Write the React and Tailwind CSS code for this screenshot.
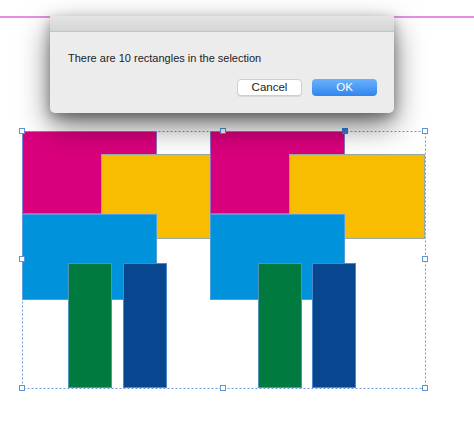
import React from "react";

const rects = [
  // left group
  { x: 22, y: 131, w: 135, h: 83, c: "bg-[#d9007d]" },
  { x: 101, y: 154, w: 136, h: 85, c: "bg-[#f8bc00]" },
  { x: 22, y: 214, w: 135, h: 86, c: "bg-[#0093dc]" },
  { x: 68, y: 263, w: 44, h: 125, c: "bg-[#007a3e]" },
  { x: 123, y: 263, w: 44, h: 125, c: "bg-[#06478f]" },
  // right group
  { x: 210, y: 131, w: 135, h: 83, c: "bg-[#d9007d]" },
  { x: 289, y: 154, w: 136, h: 85, c: "bg-[#f8bc00]" },
  { x: 210, y: 214, w: 135, h: 86, c: "bg-[#0093dc]" },
  { x: 258, y: 263, w: 44, h: 125, c: "bg-[#007a3e]" },
  { x: 312, y: 263, w: 44, h: 125, c: "bg-[#06478f]" },
];

const handles = [
  [22, 131], [223, 131], [425, 131],
  [22, 259], [425, 259],
  [22, 388], [223, 388], [425, 388],
];

const App = () => {
  return (
    <div
      className="relative w-[474px] h-[425px] bg-white overflow-hidden"
      style={{ fontFamily: '"Liberation Sans", Arial, sans-serif' }}
    >
      <div className="absolute left-0 top-[16px] h-[2px] w-full bg-[#e68fe6]" />

      {rects.map((r, i) => (
        <div
          key={i}
          className={`absolute border border-[#6fa3e4]/70 ${r.c}`}
          style={{ left: r.x, top: r.y, width: r.w, height: r.h }}
        />
      ))}

      <svg className="absolute left-0 top-0" width="474" height="425">
        <rect
          x="22.5"
          y="131.5"
          width="403"
          height="257"
          fill="none"
          stroke="#6b9fe2"
          strokeWidth="1"
          strokeDasharray="2 2"
        />
        {handles.map(([x, y], i) => (
          <rect key={i} x={x - 2.5} y={y - 2.5} width="5" height="5" fill="white" stroke="#5b93dc" strokeWidth="1" />
        ))}
        <rect x="342.5" y="128.5" width="5" height="5" fill="#3c7fd6" stroke="#3c7fd6" strokeWidth="1" />
      </svg>

      <div className="absolute left-[50px] top-[16px] w-[344px] h-[97px] bg-[#ececec] rounded-b-[5px] shadow-[0_12px_30px_rgba(0,0,0,0.55),0_4px_12px_rgba(0,0,0,0.3)] flex flex-col">
        <div className="h-[16px] bg-gradient-to-b from-[#e4e4e4] to-[#d5d5d5] border-b border-[#c4c4c4]" />
        <div className="pl-[18px] pt-[21px] text-[11px] text-[#222] leading-none">
          There are 10 rectangles in the selection
        </div>
        <div className="flex justify-end gap-[10px] pr-[17px] pt-[15px]">
          <div className="w-[65px] h-[17px] rounded-[4px] bg-white border border-[#cfcfcf] shadow-[0_1px_0_rgba(0,0,0,0.08)] flex items-center justify-center text-[11.5px] text-[#222]">
            Cancel
          </div>
          <div className="w-[65px] h-[17px] rounded-[4px] bg-gradient-to-b from-[#69b1fa] to-[#2f86ef] flex items-center justify-center text-[11.5px] text-white">
            OK
          </div>
        </div>
      </div>
    </div>
  );
};

export default App;
